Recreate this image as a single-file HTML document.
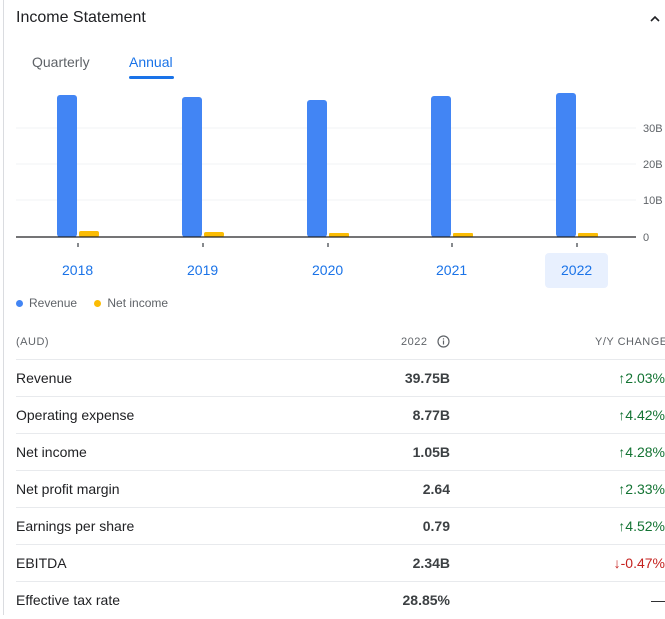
<!DOCTYPE html>
<html><head><style>
body{margin:0;width:665px;height:615px;overflow:hidden;background:#fff;font-family:"Liberation Sans",Arial,sans-serif;position:relative}
.a{position:absolute}
.lb{position:absolute;left:3px;top:0;width:1px;height:615px;background:#dadce0}
.row{position:absolute;left:16px;width:660px;height:37px;border-top:1px solid #e8eaed}
.row span{position:absolute;top:10px;font-size:14px;color:#202124}
.row .v{right:226px;text-align:right;font-weight:bold;color:#3c4043}
.row .c{right:11px;text-align:right;color:#137333}
.row .r{color:#c5221f}
.row .k{color:#202124}
</style></head><body>
<div class="lb"></div>
<div class="a" style="left:16px;top:9px;font-size:16px;color:#202124">Income Statement</div>
<svg class="a" style="left:648px;top:12px" width="14" height="14" viewBox="0 0 14 14"><path d="M3 9 L7 5 L11 9" fill="none" stroke="#202124" stroke-width="1.6"/></svg>
<div class="a" style="left:32px;top:54px;font-size:14px;color:#5f6368">Quarterly</div>
<div class="a" style="left:129px;top:54px;font-size:14px;color:#1a73e8">Annual</div>
<div class="a" style="left:129px;top:76px;width:45px;height:3px;background:#1a73e8;border-radius:2px"></div>
<svg class="a" style="left:0;top:85px" width="665" height="170">
<g stroke="#f1f3f4"><line x1="16" x2="636" y1="43" y2="43"/><line x1="16" x2="636" y1="79" y2="79"/><line x1="16" x2="636" y1="115" y2="115"/></g>
<g fill="#4285f4">
<rect x="57" y="10" width="20" height="142" rx="3"/>
<rect x="182" y="12" width="20" height="140" rx="3"/>
<rect x="307" y="15" width="20" height="137" rx="3"/>
<rect x="431" y="11" width="20" height="141" rx="3"/>
<rect x="556" y="8" width="20" height="144" rx="3"/>
</g>
<g fill="#fbbc04">
<rect x="79" y="146" width="20" height="6" rx="2"/>
<rect x="204" y="147" width="20" height="5" rx="2"/>
<rect x="329" y="148" width="20" height="4" rx="1"/>
<rect x="453" y="148" width="20" height="4" rx="1"/>
<rect x="578" y="148" width="20" height="4" rx="1"/>
</g>
<line x1="16" x2="636" y1="152" y2="152" stroke="#202124" stroke-width="1.3"/>
<g stroke="#5f6368" stroke-width="1.5"><line x1="78" x2="78" y1="158" y2="162"/><line x1="203" x2="203" y1="158" y2="162"/><line x1="328" x2="328" y1="158" y2="162"/><line x1="452" x2="452" y1="158" y2="162"/><line x1="577" x2="577" y1="158" y2="162"/></g>
<g font-size="11" fill="#5f6368" font-family="Liberation Sans"><text x="643" y="47">30B</text><text x="643" y="83">20B</text><text x="643" y="119">10B</text><text x="643" y="156">0</text></g>
</svg>
<div class="a" style="left:545px;top:253px;width:63px;height:35px;background:#e8f0fe;border-radius:4px"></div>
<div class="a" style="left:0;top:262px;width:665px;font-size:14px;color:#1a73e8">
<span class="a" style="left:62px">2018</span><span class="a" style="left:187px">2019</span><span class="a" style="left:312px">2020</span><span class="a" style="left:436px">2021</span><span class="a" style="left:561px">2022</span></div>
<div class="a" style="left:16px;top:296px;font-size:12px;color:#5f6368"><span style="display:inline-block;width:7px;height:7px;border-radius:50%;background:#4285f4;margin-right:6px"></span>Revenue <span style="display:inline-block;width:7px;height:7px;border-radius:50%;background:#fbbc04;margin:0 6px 0 14px"></span>Net income</div>
<div class="a" style="left:16px;top:336px;font-size:11px;color:#5f6368;letter-spacing:.5px">(AUD)</div>
<div class="a" style="left:401px;top:336px;font-size:11px;color:#5f6368;letter-spacing:.5px">2022</div>
<svg class="a" style="left:437px;top:335px" width="13" height="13" viewBox="0 0 13 13"><circle cx="6.5" cy="6.5" r="5.5" fill="none" stroke="#5f6368" stroke-width="1.2"/><rect x="5.9" y="5.5" width="1.2" height="4" fill="#5f6368"/><rect x="5.9" y="3.3" width="1.2" height="1.2" fill="#5f6368"/></svg>
<div class="a" style="left:595px;top:336px;font-size:11px;color:#5f6368;letter-spacing:.5px;white-space:nowrap">Y/Y CHANGE</div>
<div class="row" style="top:359px"><span>Revenue</span><span class="v">39.75B</span><span class="c">↑2.03%</span></div>
<div class="row" style="top:396px"><span>Operating expense</span><span class="v">8.77B</span><span class="c">↑4.42%</span></div>
<div class="row" style="top:433px"><span>Net income</span><span class="v">1.05B</span><span class="c">↑4.28%</span></div>
<div class="row" style="top:470px"><span>Net profit margin</span><span class="v">2.64</span><span class="c">↑2.33%</span></div>
<div class="row" style="top:507px"><span>Earnings per share</span><span class="v">0.79</span><span class="c">↑4.52%</span></div>
<div class="row" style="top:544px"><span>EBITDA</span><span class="v">2.34B</span><span class="c r">↓-0.47%</span></div>
<div class="row" style="top:581px"><span>Effective tax rate</span><span class="v">28.85%</span><span class="c k">—</span></div>
</body></html>
